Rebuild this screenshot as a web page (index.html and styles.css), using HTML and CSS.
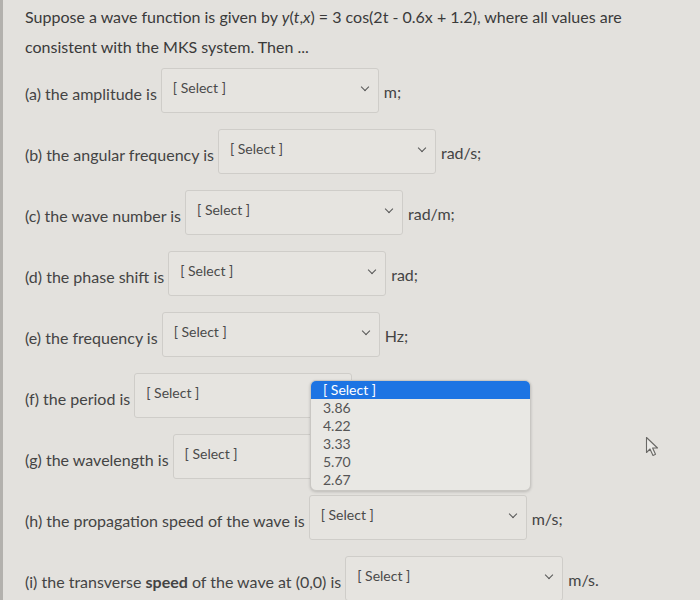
FILE: index.html
```html
<!DOCTYPE html>
<html>
<head>
<meta charset="utf-8">
<link rel="stylesheet" href="styles.css">
</head>
<body>
<div class="page">
  <p class="intro">Suppose a wave function is given by <i>y</i>(<i>t</i>,<i>x</i>) = 3 cos(2t - 0.6x + 1.2), where all values are<br>consistent with the MKS system. Then ...</p>

  <div class="row"><span class="label">(a) the amplitude is</span><div class="sel"><span class="ph">[ Select ]</span><span class="chev"></span></div><span class="unit">m;</span></div>
  <div class="row"><span class="label">(b) the angular frequency is</span><div class="sel"><span class="ph">[ Select ]</span><span class="chev"></span></div><span class="unit">rad/s;</span></div>
  <div class="row"><span class="label">(c) the wave number is</span><div class="sel"><span class="ph">[ Select ]</span><span class="chev"></span></div><span class="unit">rad/m;</span></div>
  <div class="row"><span class="label">(d) the phase shift is</span><div class="sel"><span class="ph">[ Select ]</span><span class="chev"></span></div><span class="unit">rad;</span></div>
  <div class="row"><span class="label">(e) the frequency is</span><div class="sel"><span class="ph">[ Select ]</span><span class="chev"></span></div><span class="unit">Hz;</span></div>
  <div class="row"><span class="label">(f) the period is</span><div class="sel"><span class="ph">[ Select ]</span><span class="chev"></span></div></div>
  <div class="row"><span class="label">(g) the wavelength is</span><div class="sel"><span class="ph">[ Select ]</span><span class="chev"></span></div></div>
  <div class="row"><span class="label">(h) the propagation speed of the wave is</span><div class="sel"><span class="ph">[ Select ]</span><span class="chev"></span></div><span class="unit">m/s;</span></div>
  <div class="row"><span class="label">(i) the transverse <b>speed</b> of the wave at (0,0) is</span><div class="sel"><span class="ph">[ Select ]</span><span class="chev"></span></div><span class="unit">m/s.</span></div>

  <ul class="dropdown">
    <li class="active">[ Select ]</li>
    <li>3.86</li>
    <li>4.22</li>
    <li>3.33</li>
    <li>5.70</li>
    <li>2.67</li>
  </ul>

  <svg class="cursor" width="16" height="22" viewBox="0 0 16 22">
    <path d="M1.5 1.5 L1.5 16.5 L5 13 L8 19.5 L10.5 18.3 L7.6 12 L12.5 12 Z" fill="#ecebe8" stroke="#6a6966" stroke-width="1.1" stroke-linejoin="round"/>
  </svg>
</div>
</body>
</html>
```

FILE: styles.css
```css
html, body {
  margin: 0;
  padding: 0;
  background: #e3e1dd;
}
body {
  font-family: Lato, "Open Sans", sans-serif;
  color: #3f3f3f;
  width: 700px;
  height: 600px;
  overflow: hidden;
}
.page {
  position: relative;
  height: 600px;
  padding-left: 22px;
  border-left: 3px solid #b3b1ad;
  box-sizing: border-box;
}
.intro {
  margin: 0;
  padding-top: 2px;
  font-size: 16px;
  line-height: 30px;
  white-space: nowrap;
  color: #3a3a3a;
}
.intro i {
  font-style: italic;
}
.row {
  display: flex;
  align-items: center;
  height: 45px;
  margin-top: 16px;
  font-size: 16px;
  white-space: nowrap;
}
.intro + .row {
  margin-top: 6px;
}
.label {
  padding-top: 5px;
  color: #444;
}
.label b {
  font-weight: 700;
}
.sel {
  position: relative;
  margin-left: 4px;
  width: 218px;
  height: 45px;
  box-sizing: border-box;
  border: 1px solid #cfcdc9;
  border-radius: 3px;
  background: #e6e4e0;
}
.ph {
  position: absolute;
  left: 11px;
  top: 11px;
  font-size: 14px;
  line-height: 16px;
  color: #4a4a4a;
}
.chev {
  position: absolute;
  right: 10px;
  top: 15px;
  width: 5px;
  height: 5px;
  border-right: 1.6px solid #555;
  border-bottom: 1.6px solid #555;
  transform: rotate(45deg);
}
.unit {
  margin-left: 5px;
  padding-top: 2px;
  color: #444;
}
.dropdown {
  position: absolute;
  left: 307px;
  top: 380px;
  width: 221px;
  height: 111px;
  margin: 0;
  padding: 0;
  list-style: none;
  background: #e9e8e4;
  border: 1px solid #c9c7c3;
  border-radius: 6px;
  box-shadow: 0 1px 3px rgba(0,0,0,0.18);
  overflow: hidden;
  box-sizing: border-box;
  font-size: 14px;
}
.dropdown li {
  height: 18px;
  line-height: 18px;
  padding-left: 12px;
  color: #555;
}
.dropdown li.active {
  background: #1d74e3;
  color: #fff;
}
.cursor {
  position: absolute;
  left: 642px;
  top: 436px;
}
```
